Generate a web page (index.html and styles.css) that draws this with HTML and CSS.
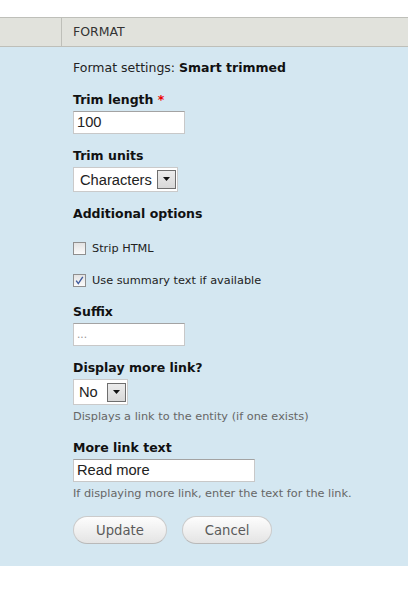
FILE: index.html
```html
<!DOCTYPE html>
<html>
<head>
<meta charset="utf-8">
<link rel="stylesheet" href="styles.css">
</head>
<body>
<div class="page">
  <div class="header">
    <div class="header-spacer"></div>
    <div class="header-title">FORMAT</div>
  </div>
  <div class="panel">
    <div class="format-line">Format settings: <strong>Smart trimmed</strong></div>

    <div class="form-item">
      <label class="label">Trim length <span class="req">*</span></label>
      <div class="text-input w112">100</div>
    </div>

    <div class="form-item">
      <label class="label">Trim units</label>
      <div class="select w105"><span class="select-text">Characters</span><span class="arrow"><svg width="8" height="5" viewBox="0 0 8 5"><path d="M0 0H7L3.5 4Z" fill="#111"/></svg></span></div>
    </div>

    <div class="form-item">
      <label class="label">Additional options</label>
    </div>

    <div class="check-row first">
      <span class="checkbox"></span><span class="check-label">Strip HTML</span>
    </div>
    <div class="check-row">
      <span class="checkbox"><svg width="11" height="11" viewBox="0 0 11 11"><path d="M2.2 5.6L4.3 8.6L8.8 1.8" fill="none" stroke="#3f5c9e" stroke-width="1.4"/></svg></span><span class="check-label">Use summary text if available</span>
    </div>

    <div class="form-item">
      <label class="label">Suffix</label>
      <div class="text-input w112 muted">...</div>
    </div>

    <div class="form-item">
      <label class="label">Display more link?</label>
      <div class="select w55"><span class="select-text">No</span><span class="arrow"><svg width="8" height="5" viewBox="0 0 8 5"><path d="M0 0H7L3.5 4Z" fill="#111"/></svg></span></div>
      <div class="description">Displays a link to the entity (if one exists)</div>
    </div>

    <div class="form-item">
      <label class="label">More link text</label>
      <div class="text-input w182">Read more</div>
      <div class="description">If displaying more link, enter the text for the link.</div>
    </div>

    <div class="actions">
      <button class="button">Update</button>
      <button class="button">Cancel</button>
    </div>
  </div>
</div>
</body>
</html>
```

FILE: styles.css
```css
html, body {
  margin: 0;
  padding: 0;
  background: #ffffff;
}
body {
  font-family: "DejaVu Sans", Verdana, sans-serif;
  color: #222;
}
.page {
  padding-top: 17px;
}
.header {
  display: flex;
  height: 28px;
  background: #e1e2dc;
  border-top: 1px solid #bebfb9;
  border-bottom: 1px solid #bebfb9;
}
.header-spacer {
  width: 61px;
  border-right: 1px solid #bebfb9;
}
.header-title {
  padding-left: 11px;
  font-size: 12.5px;
  line-height: 28px;
  color: #333;
}
.panel {
  background: #d4e7f1;
  padding: 11px 0 22px 73px;
}
.format-line {
  font-size: 12.5px;
  line-height: 20px;
  color: #222;
}
.format-line strong {
  color: #111;
}
.form-item {
  margin-top: 12px;
}
.label {
  display: block;
  font-size: 12.5px;
  font-weight: bold;
  line-height: 20px;
  color: #111;
  margin-bottom: 1px;
}
.req {
  color: #e00;
}
.text-input {
  box-sizing: border-box;
  height: 23px;
  background: #fff;
  border: 1px solid #c8c8c8;
  border-top-color: #a3a3a3;
  font-family: "Liberation Sans", Arial, sans-serif;
  font-size: 14.7px;
  line-height: 21px;
  padding-left: 3px;
  color: #222;
}
.text-input.muted {
  color: #999;
  font-size: 12px;
}
.w112 { width: 112px; }
.w182 { width: 182px; }
.w105 { width: 105px; }
.w55 { width: 55px; }
.select {
  box-sizing: border-box;
  display: flex;
  align-items: center;
  justify-content: space-between;
  height: 25px;
  background: #fff;
  border: 1px solid #cacaca;
  padding: 0 1px 0 6px;
  font-family: "Liberation Sans", Arial, sans-serif;
  font-size: 14.7px;
  color: #222;
}
.select.w55 {
  height: 26px;
  padding-left: 5px;
}
.arrow {
  box-sizing: border-box;
  display: flex;
  align-items: center;
  justify-content: center;
  width: 19px;
  height: 19px;
  border: 1px solid #6e6e6e;
  background: linear-gradient(#ececec, #d8d8d8);
}
.check-row {
  display: flex;
  align-items: center;
  height: 20px;
  margin-top: 12px;
}
.check-row.first {
  margin-top: 14px;
}
.checkbox {
  box-sizing: border-box;
  display: flex;
  align-items: center;
  justify-content: center;
  width: 13px;
  height: 13px;
  border: 1px solid #8f8f8f;
  background: linear-gradient(#e3e3e3, #fbfbfb);
  margin-right: 6px;
}
.check-label {
  font-size: 11.3px;
  color: #222;
}
.description {
  font-size: 11.3px;
  line-height: 18px;
  color: #666;
  margin-top: 3px;
}
.actions {
  display: flex;
  gap: 15px;
  margin-top: 13px;
}
.button {
  box-sizing: border-box;
  height: 28px;
  padding: 0 22px;
  border: 1px solid #cbcbcb;
  border-bottom-color: #b9b9b9;
  border-radius: 14px;
  background: linear-gradient(#fdfdfd, #e4e4e4);
  font-family: "DejaVu Sans", Verdana, sans-serif;
  font-size: 13.2px;
  color: #5a5a5a;
}
```
